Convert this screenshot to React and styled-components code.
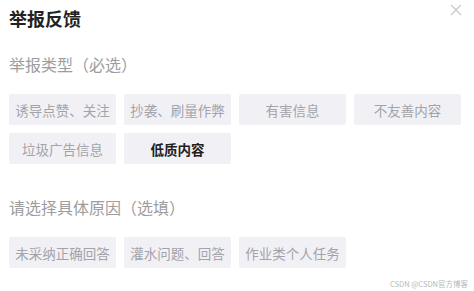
import React, { useState } from 'react';
import styled, { createGlobalStyle } from 'styled-components';

const GlobalStyle = createGlobalStyle`
  html, body {
    margin: 0;
    padding: 0;
    background: #fff;
  }
  body {
    font-family: "Noto Sans CJK SC", "Noto Sans", sans-serif;
  }
`;

const Panel = styled.div`
  position: relative;
  width: 474px;
  height: 291px;
  box-sizing: border-box;
  padding: 6px 13px 0 9px;
  overflow: hidden;
`;

const Header = styled.div`
  display: flex;
  justify-content: space-between;
  align-items: flex-start;
`;

const Title = styled.h1`
  margin: 0;
  font-size: 18px;
  line-height: 24px;
  font-weight: 700;
  color: #222;
`;

const Close = styled.button`
  margin: -3px -2px 0 0;
  padding: 0;
  border: 0;
  background: none;
  width: 14px;
  height: 14px;
  display: flex;
  align-items: center;
  justify-content: center;
  cursor: pointer;
`;

const Label = styled.div`
  margin-top: ${p => p.$gap}px;
  font-size: 16px;
  line-height: 24px;
  color: #9d9d9d;
`;

const Options = styled.div`
  margin-top: 18px;
  display: grid;
  grid-template-columns: repeat(4, 107px);
  gap: 8px;
`;

const Chip = styled.button`
  height: 31px;
  padding: 0;
  border: 0;
  border-radius: 2px;
  background: #f1f1f5;
  font-family: inherit;
  font-size: 13.5px;
  font-weight: ${p => (p.$active ? 700 : 400)};
  color: ${p => (p.$active ? '#222' : '#a3a3a9')};
  cursor: pointer;
`;

const Watermark = styled.div`
  position: absolute;
  right: 6px;
  bottom: 3px;
  font-size: 7.5px;
  line-height: 8px;
  color: #b8b8b8;
`;

const types = ['诱导点赞、关注', '抄袭、刷量作弊', '有害信息', '不友善内容', '垃圾广告信息', '低质内容'];
const reasons = ['未采纳正确回答', '灌水问题、回答', '作业类个人任务'];

export default function App() {
  const [type, setType] = useState('低质内容');
  const [reason, setReason] = useState(null);

  return (
    <Panel>
      <GlobalStyle />
      <Header>
        <Title>举报反馈</Title>
        <Close aria-label="关闭">
          <svg width="12" height="12" viewBox="0 0 12 12">
            <path d="M1 1L11 11M11 1L1 11" stroke="#c8c8c8" strokeWidth="1.2" />
          </svg>
        </Close>
      </Header>
      <Label $gap={22}>举报类型（必选）</Label>
      <Options>
        {types.map(t => (
          <Chip key={t} $active={t === type} onClick={() => setType(t)}>{t}</Chip>
        ))}
      </Options>
      <Label $gap={31}>请选择具体原因（选填）</Label>
      <Options>
        {reasons.map(r => (
          <Chip key={r} $active={r === reason} onClick={() => setReason(r)}>{r}</Chip>
        ))}
      </Options>
      <Watermark>CSDN @CSDN官方博客</Watermark>
    </Panel>
  );
}
